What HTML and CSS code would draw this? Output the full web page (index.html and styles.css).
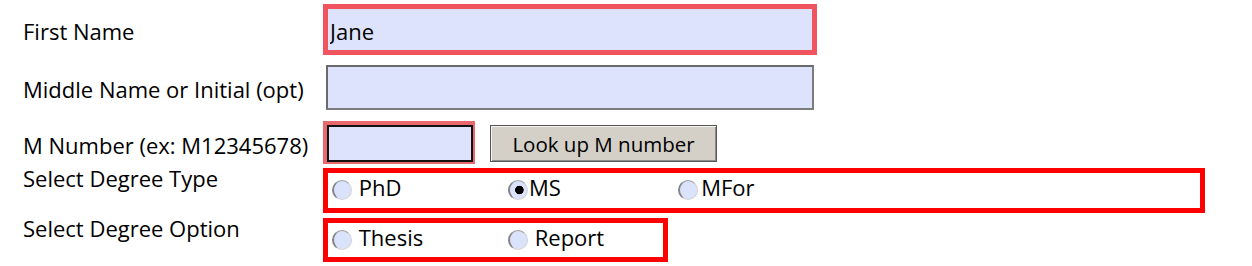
FILE: index.html
```html
<!DOCTYPE html>
<html lang="en">
<head>
  <meta charset="UTF-8">
  <title>Student Information</title>
  <link rel="stylesheet" href="styles.css">
</head>
<body>
  <form class="form">
    <div class="row">
      <label class="label" for="first">First Name</label>
      <input id="first" class="field field-wide invalid" type="text" value="Jane">
    </div>
    <div class="row row-middle">
      <label class="label" for="middle">Middle Name or Initial (opt)</label>
      <input id="middle" class="field field-wide" type="text">
    </div>
    <div class="row row-mnum">
      <label class="label" for="mnum">M Number (ex: M12345678)</label>
      <input id="mnum" class="field field-short required" type="text">
      <button type="button" class="lookup">Look up M number</button>
    </div>
    <div class="row row-choice">
      <span class="label">Select Degree Type</span>
      <div class="choices choices-type">
        <label class="opt"><input type="radio" name="degree"> PhD</label>
        <label class="opt"><input type="radio" name="degree" checked>MS</label>
        <label class="opt"><input type="radio" name="degree">&#8202;MFor</label>
      </div>
    </div>
    <div class="row row-choice row-option">
      <span class="label">Select Degree Option</span>
      <div class="choices choices-option">
        <label class="opt"><input type="radio" name="option"> Thesis</label>
        <label class="opt"><input type="radio" name="option"> Report</label>
      </div>
    </div>
  </form>
</body>
</html>
```

FILE: styles.css
```css
body {
  margin: 0;
  background: #fff;
  color: #000;
  font-family: "Open Sans", "Noto Sans", sans-serif;
  font-size: 22px;
}

.form {
  padding: 7px 0 0 23px;
}

.row {
  display: flex;
  align-items: center;
}

.label {
  width: 300px;
  flex: none;
  line-height: 20px;
  padding-top: 2px;
  white-space: nowrap;
}

.row-middle {
  margin-top: 13px;
}
.row-mnum {
  margin-top: 15px;
}
.row-choice {
  margin-top: 6px;
  align-items: flex-start;
}
.row-choice .label {
  padding-top: 0;
}
.row-option {
  margin-top: 5px;
}

/* --------------- Camps ----------------- */

.field {
  box-sizing: border-box;
  margin: 0 0 0 3px;
  padding: 3px 2px 0;
  font: inherit;
  color: #000;
  background: #dde3fc;
  border: 2px solid #7c7c7c;
  border-top-color: #6a6a6a;
  border-left-color: #6a6a6a;
}
.field:focus {
  outline: none;
}
.field-wide {
  width: 488px;
  height: 45px;
}
.field-short {
  width: 146px;
  height: 37px;
  margin-left: 4px;
}
.invalid {
  border-color: #f0545e;
  box-shadow: 0 0 0 3px #f0545e;
}
.required {
  border-color: #111;
  box-shadow: 0 0 0 2px #e9686d, -1px -1px 0 3px #e9686d;
}

.lookup {
  box-sizing: border-box;
  width: 227px;
  height: 37px;
  margin-left: 17px;
  padding: 0;
  font: inherit;
  font-size: 20.5px;
  color: #000;
  background: #d4d0c8;
  border: 1px solid #555;
  box-shadow: inset 1px 1px 0 #f4f4f4, inset -1px -1px 0 #8c8c8c;
}

/* --------------- Opcions ----------------- */

.choices {
  box-sizing: border-box;
  display: grid;
  grid-template-columns: 176px 170px auto;
  align-items: center;
  padding: 0 0 4px 4px;
  border: 5px solid #f00;
  line-height: 20px;
}
.choices-type {
  width: 882px;
  height: 45px;
}
.choices-option {
  width: 345px;
  height: 44px;
}

.opt {
  white-space: nowrap;
}
.opt input {
  -webkit-appearance: none;
  appearance: none;
  box-sizing: border-box;
  display: inline-block;
  vertical-align: -4px;
  width: 20px;
  height: 20px;
  margin: 0 1px 0 0;
  border-radius: 50%;
  border: 1px solid #d4d4d4;
  border-left: 2px solid #858585;
  border-top-color: #a4a4a4;
  background: #dbe2fc;
}
.opt input:checked {
  background: radial-gradient(circle at 55% 50%, #000 0 4px, #dbe2fc 4.6px);
}
```
